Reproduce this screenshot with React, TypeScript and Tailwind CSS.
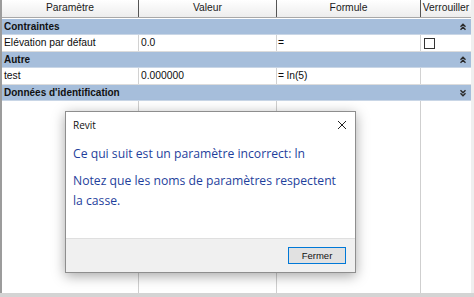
import React from "react";

const Chev = ({ down }: { down?: boolean }) => (
  <svg width="8" height="8" viewBox="0 0 8 8" className="mr-[4px]">
    <path
      d={
        down
          ? "M1.5 1.2 L4 3.7 L6.5 1.2 M1.5 4.3 L4 6.8 L6.5 4.3"
          : "M1.5 3.7 L4 1.2 L6.5 3.7 M1.5 6.8 L4 4.3 L6.5 6.8"
      }
      fill="none"
      stroke="#2a2a2a"
      strokeWidth="1.4"
    />
  </svg>
);

const Group = ({ label, down }: { label: string; down?: boolean }) => (
  <div className="h-[16px] flex items-center justify-between bg-[#a6bedb] border-b border-[#c9d6e6] pl-[2px]">
    <span className="font-bold text-[10px] leading-none text-[#111]">{label}</span>
    <Chev down={down} />
  </div>
);

const Row = ({ a, b, c, check }: { a: string; b: string; c: string; check?: boolean }) => (
  <div className="h-[17px] grid grid-cols-[137px_138px_144px_50px] border-b border-[#dcdcdc] text-[10.3px] leading-none text-[#0d0d0d]">
    <div className="flex items-center pl-[2px] border-r border-[#d2d2d2]">{a}</div>
    <div className="flex items-center pl-[2px] border-r border-[#d2d2d2]">{b}</div>
    <div className="flex items-center pl-[1px] border-r border-[#d2d2d2]">{c}</div>
    <div className="flex items-center pl-[3px]">
      {check && <div className="w-[11px] h-[11px] border border-[#333] bg-white" />}
    </div>
  </div>
);

export default function App() {
  return (
    <div className="relative w-[474px] h-[297px] bg-white overflow-hidden flex flex-col font-['Liberation_Sans',Arial,sans-serif]">
      <div className="flex flex-1">
        <div className="w-[2px] bg-[#9c9c9c]" />
        <div className="w-[469px] flex flex-col">
          {/* header */}
          <div className="h-[18px] grid grid-cols-[137px_138px_144px_50px] bg-gradient-to-b from-[#ffffff] to-[#ededed] border-b border-[#a8a8a8] text-[10.3px] leading-none text-[#1a1a1a]">
            <div className="flex items-center justify-center border-r border-[#555]">Paramètre</div>
            <div className="flex items-center justify-center border-r border-[#555]">Valeur</div>
            <div className="flex items-center justify-center border-r border-[#555]">Formule</div>
            <div className="flex items-center justify-center">Verrouiller</div>
          </div>
          <div className="h-[1px] bg-white" />
          <Group label="Contraintes" />
          <Row a="Elévation par défaut" b="0.0" c="=" check />
          <Group label="Autre" />
          <Row a="test" b="0.000000" c="= ln(5)" />
          <Group label="Données d'identification" down />
          <div className="flex-1 grid grid-cols-[137px_138px_144px_50px]">
            <div className="border-r border-[#cfcfcf]" />
            <div className="border-r border-[#cfcfcf]" />
            <div className="border-r border-[#cfcfcf]" />
            <div />
          </div>
        </div>
        <div className="w-[3px] bg-[#efefef]" />
      </div>
      <div className="h-[4px] bg-[#d4d4d4]" />

      {/* dialog */}
      <div className="absolute left-[65px] top-[111px] w-[291px] h-[162px] bg-white border border-[#8e8e8e] shadow-[0_3px_12px_rgba(0,0,0,0.35)] flex flex-col font-['Open_Sans',sans-serif]">
        <div className="h-[26px] flex items-center justify-between pl-[7px] pr-[8px]">
          <span className="text-[10px] leading-none text-[#111]">Revit</span>
          <svg width="10" height="10" viewBox="0 0 10 10">
            <path d="M1 1 L9 9 M9 1 L1 9" stroke="#222" strokeWidth="1" fill="none" />
          </svg>
        </div>
        <div className="flex-1 pl-[7px] pt-[6px] text-[12.2px] leading-[20px] text-[#1f3f9c]">
          <p>Ce qui suit est un paramètre incorrect: ln</p>
          <p className="mt-[7px]">Notez que les noms de paramètres respectent</p>
          <p>la casse.</p>
        </div>
        <div className="h-[34px] bg-[#f0f0f0] border-t border-[#dfdfdf] flex items-center justify-end pr-[9px]">
          <div className="w-[58px] h-[17px] bg-[#e1e1e1] border border-[#0078d7] flex items-center justify-center text-[9.5px] leading-none text-[#111] font-['Liberation_Sans',Arial,sans-serif]">
            Fermer
          </div>
        </div>
      </div>
    </div>
  );
}
